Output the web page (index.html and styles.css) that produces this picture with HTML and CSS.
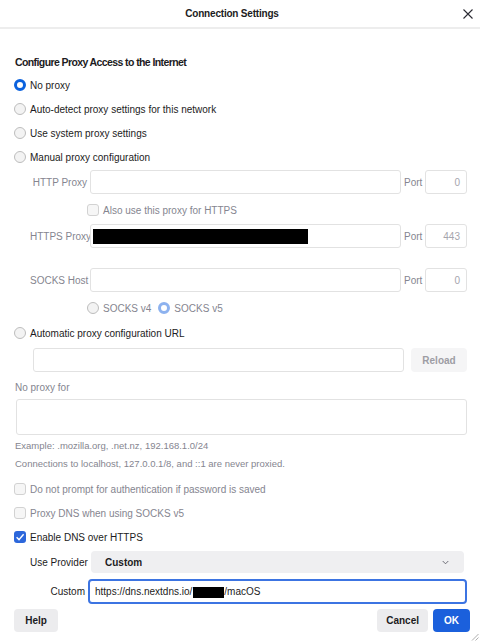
FILE: index.html
```html
<!DOCTYPE html>
<html lang="en">
<head>
    <meta charset="UTF-8">
    <meta name="viewport" content="width=device-width, initial-scale=1.0">
    <link rel="stylesheet" href="styles.css">
    <title>Connection Settings</title>
</head>
<body>
    <div class="dialog">
        <header class="titlebar">
            <span class="title">Connection Settings</span>
            <svg class="close" viewBox="0 0 10 10"><path d="M0.5 0.5 L9.5 9.5 M9.5 0.5 L0.5 9.5" stroke="#2b2a33" stroke-width="1.1" fill="none"/></svg>
        </header>

        <main class="content">
            <h1>Configure Proxy Access to the Internet</h1>

            <div class="option"><span class="radio on"></span>No proxy</div>
            <div class="option"><span class="radio"></span>Auto-detect proxy settings for this network</div>
            <div class="option"><span class="radio"></span>Use system proxy settings</div>
            <div class="option"><span class="radio"></span>Manual proxy configuration</div>

            <div class="manual">
                <div class="proxy-row">
                    <span class="label">HTTP Proxy</span>
                    <div class="field"></div>
                    <span class="label">Port</span>
                    <div class="field port">0</div>
                </div>
                <div class="sub-option"><span class="check"></span>Also use this proxy for HTTPS</div>
                <div class="proxy-row https">
                    <span class="label">HTTPS Proxy</span>
                    <div class="field"><span class="redacted"></span></div>
                    <span class="label">Port</span>
                    <div class="field port">443</div>
                </div>
                <div class="proxy-row socks">
                    <span class="label">SOCKS Host</span>
                    <div class="field"></div>
                    <span class="label">Port</span>
                    <div class="field port">0</div>
                </div>
                <div class="sub-option socks-version">
                    <span class="radio"></span>SOCKS v4
                    <span class="radio on dim v5"></span>SOCKS v5
                </div>
            </div>

            <div class="option auto"><span class="radio"></span>Automatic proxy configuration URL</div>
            <div class="url-row">
                <div class="field url"></div>
                <span class="reload">Reload</span>
            </div>

            <div class="muted no-proxy">No proxy for</div>
            <div class="field textarea"></div>
            <div class="muted note">Example: .mozilla.org, .net.nz, 192.168.1.0/24</div>
            <div class="muted note">Connections to localhost, 127.0.0.1/8, and ::1 are never proxied.</div>

            <div class="option muted first-check"><span class="check"></span>Do not prompt for authentication if password is saved</div>
            <div class="option muted"><span class="check"></span>Proxy DNS when using SOCKS v5</div>
            <div class="option">
                <span class="check on">
                    <svg viewBox="0 0 12 12"><path d="M2.6 6.2 L5 8.6 L9.6 3.2" stroke="#fff" stroke-width="1.4" fill="none"/></svg>
                </span>Enable DNS over HTTPS
            </div>

            <div class="dns">
                <span class="dns-label">Use Provider</span>
                <div class="select">
                    <span>Custom</span>
                    <svg class="chevron" viewBox="0 0 8 5"><path d="M0.8 0.8 L4 4 L7.2 0.8" stroke="#5b5b66" stroke-width="1" fill="none"/></svg>
                </div>
                <span class="dns-label custom-label">Custom</span>
                <div class="custom-input">https://dns.nextdns.io/<span class="redacted small"></span>/macOS</div>
            </div>

            <footer class="buttons">
                <span class="btn help">Help</span>
                <div class="right">
                    <span class="btn">Cancel</span>
                    <span class="btn primary">OK</span>
                </div>
            </footer>
        </main>

        <svg class="grip" viewBox="0 0 8 8"><path d="M7.5 1 L1 7.5 M7.5 4.5 L4.5 7.5" stroke="#9a9a9a" stroke-width="0.8" fill="none"/></svg>
    </div>
</body>
</html>
```

FILE: styles.css
```css
* {
    box-sizing: border-box;
}

body {
    margin: 0;
    font-family: "Liberation Sans", Arial, sans-serif;
    font-size: 10px;
    color: #1c1b22;
    background-color: #fff;
}

.dialog {
    position: relative;
    width: 480px;
    height: 642px;
    overflow: hidden;
}

.titlebar {
    position: relative;
    height: 29px;
    border-bottom: 2px solid #ededed;
    display: flex;
    align-items: center;
    justify-content: center;
}

.title {
    font-weight: bold;
    letter-spacing: -0.2px;
    margin-right: 16px;
}

.close {
    position: absolute;
    top: 9px;
    right: 7px;
    width: 10px;
    height: 10px;
}

.content {
    padding: 0 13px 0 15px;
}

h1 {
    font-size: 10.5px;
    letter-spacing: -0.6px;
    line-height: 14px;
    margin: 26px 0 4px;
}

.option,
.sub-option {
    display: flex;
    align-items: center;
    height: 24px;
    gap: 4px;
    white-space: nowrap;
}

.option .radio,
.option .check {
    margin-left: -1px;
}

.radio {
    flex: none;
    width: 12px;
    height: 12px;
    border-radius: 50%;
    border: 1px solid #bdbdbd;
    background-color: #f3f3f3;
}

.radio.on {
    border: 3.5px solid #0b62de;
    background-color: #fff;
}

.radio.dim {
    border-color: #8db2ef;
}

.check {
    flex: none;
    width: 12px;
    height: 12px;
    border-radius: 3px;
    border: 1px solid #d2d2d2;
    background-color: #f6f6f6;
}

.check.on {
    border: none;
    background-color: #2c67db;
}

.check svg {
    display: block;
    width: 12px;
    height: 12px;
}

.muted,
.label,
.sub-option {
    color: #85858f;
}

.label,
.dns-label {
    white-space: nowrap;
}

.manual {
    margin: 1px 0 0 15px;
}

.proxy-row {
    display: grid;
    grid-template-columns: 57px 311px 18px 42px;
    column-gap: 3px;
    align-items: center;
    height: 24px;
}

.proxy-row .label:first-child {
    text-align: right;
}

.proxy-row.https {
    margin-top: 2px;
}

.proxy-row.socks {
    margin-top: 20px;
}

.field {
    height: 24px;
    border: 1px solid #e2e2e2;
    border-radius: 3px;
    background-color: #fff;
    display: flex;
    align-items: center;
}

.port {
    justify-content: flex-end;
    padding-right: 6px;
    color: #a5a5ad;
}

.redacted {
    display: block;
    width: 215px;
    height: 15px;
    margin-left: 2px;
    background-color: #000;
}

.redacted.small {
    display: inline-block;
    width: 31px;
    height: 11px;
    margin: 0 0 -2px 1px;
}

.sub-option {
    margin-top: 4px;
    padding-left: 57px;
}

.socks-version {
    margin-top: 4px;
}

.radio.v5 {
    margin-left: 3px;
}

.option.auto {
    margin-top: 1px;
}

.url-row {
    display: flex;
    gap: 7px;
    margin: 3px 0 0 18px;
}

.field.url {
    width: 371px;
}

.reload {
    width: 56px;
    height: 24px;
    border-radius: 4px;
    background-color: #f5f5f6;
    color: #9d9da4;
    font-weight: bold;
    display: flex;
    align-items: center;
    justify-content: center;
}

.no-proxy {
    line-height: 14px;
    margin-top: 9px;
}

.textarea {
    height: 36px;
    margin: 4px 0 0 1px;
}

.note {
    font-size: 9.5px;
    line-height: 14px;
    margin-top: 4px;
}

.first-check {
    margin-top: 6px;
}

.dns {
    display: grid;
    grid-template-columns: 55px 1fr;
    column-gap: 3px;
    row-gap: 6px;
    align-items: center;
    margin: 2px 0 0 15px;
}

.dns-label {
    text-align: right;
}

.select {
    height: 22px;
    margin: 0 3px;
    padding: 0 14px;
    border-radius: 4px;
    background-color: #efeff1;
    font-weight: bold;
    display: flex;
    align-items: center;
    justify-content: space-between;
}

.chevron {
    width: 7px;
    height: 5px;
    margin-right: 1px;
}

.custom-input {
    height: 25px;
    padding-left: 5px;
    border: 2px solid #3c74e2;
    border-radius: 4px;
    display: flex;
    align-items: center;
    white-space: nowrap;
}

.buttons {
    display: flex;
    justify-content: space-between;
    margin: 5px -3px 0 -1px;
}

.buttons .right {
    display: flex;
    gap: 5px;
}

.btn {
    height: 23px;
    padding: 0 9px;
    border-radius: 4px;
    background-color: #ececee;
    font-weight: bold;
    display: flex;
    align-items: center;
    justify-content: center;
}

.btn.help {
    width: 44px;
}

.btn.primary {
    width: 37px;
    background-color: #1b60dc;
    color: #fff;
}

.grip {
    position: absolute;
    right: 1px;
    bottom: 1px;
    width: 8px;
    height: 8px;
}
```
